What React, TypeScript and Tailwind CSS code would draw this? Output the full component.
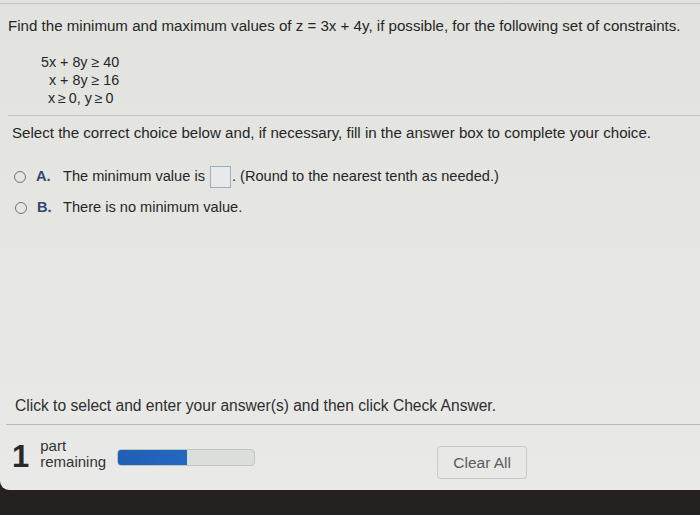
import React from "react";

export default function App() {
  return (
    <div className="w-[700px] h-[515px] overflow-hidden bg-[#24211f] font-['Liberation_Sans',Arial,sans-serif] text-[#262626]">
      <div className="h-[490px] flex flex-col rounded-bl-[9px] bg-linear-to-b from-[#e2e3df] to-[#e9eae7]">
        <div className="h-[3px]" />
        <div className="h-px bg-[#c3c4c0]" />
        <p className="mt-[12px] ml-[8px] text-[15.1px] leading-[20px] whitespace-nowrap">
          Find the minimum and maximum values of z = 3x + 4y, if possible, for the following set of constraints.
        </p>
        <div className="mt-[17px] text-[14.3px] leading-[18px] whitespace-nowrap">
          <div className="pl-[41px]">5x + 8y ≥ 40</div>
          <div className="pl-[49px]">x + 8y ≥ 16</div>
          <div className="pl-[48px]">x{"\u2009"}≥{"\u2009"}0, y{"\u2009"}≥{"\u2009"}0</div>
        </div>
        <div className="mt-[8px] ml-[8px] h-px bg-[#c3c4c0]" />
        <p className="mt-[7px] ml-[12px] text-[15.1px] leading-[20px] whitespace-nowrap">
          Select the correct choice below and, if necessary, fill in the answer box to complete your choice.
        </p>
        <div className="mt-[22px] h-[24px] flex items-center whitespace-nowrap text-[14.6px]">
          <span className="ml-[14px] w-[12px] h-[12px] rounded-full border-[1.5px] border-[#727476]" />
          <span className="ml-[10px] w-[27px] font-bold text-[#33466f]">A.</span>
          <span>The minimum value is</span>
          <span className="ml-[5px] w-[21px] h-[22px] border border-[#98aec2] bg-[#e7eae9]" />
          <span className="ml-[1px]">. (Round to the nearest tenth as needed.)</span>
        </div>
        <div className="mt-[7px] h-[24px] flex items-center whitespace-nowrap text-[14.6px]">
          <span className="ml-[15px] w-[12px] h-[12px] rounded-full border-[1.5px] border-[#727476]" />
          <span className="ml-[10px] w-[26px] font-bold text-[#33466f]">B.</span>
          <span>There is no minimum value.</span>
        </div>
        <p className="mt-auto ml-[15px] text-[15.6px] leading-[20px] whitespace-nowrap text-[#2e2e2e]">
          Click to select and enter your answer(s) and then click Check Answer.
        </p>
        <div className="mt-[8px] ml-[6px] h-px bg-[#b9bbb8]" />
        <div className="h-[65px] flex items-start">
          <span className="ml-[12px] mt-[16px] text-[31px] leading-[31px] font-bold text-[#2a2a2a]">1</span>
          <div className="ml-[11px] mt-[13px] text-[15px] leading-[16px] text-[#333]">
            <div>part</div>
            <div>remaining</div>
          </div>
          <div className="ml-[11px] mt-[24px] w-[138px] h-[17px] rounded-[4px] border border-[#c2c4c2] bg-[#dcdedc] overflow-hidden flex">
            <div className="w-[69px] h-full bg-linear-to-r from-[#1f5fb4] to-[#2468c0]" />
          </div>
          <button className="ml-[182px] mt-[21px] w-[90px] h-[33px] rounded-[3px] border border-[#c8cac7] bg-[#e8e9e6] text-[15.5px] text-[#5a5d60]">
            Clear All
          </button>
        </div>
      </div>
    </div>
  );
}
